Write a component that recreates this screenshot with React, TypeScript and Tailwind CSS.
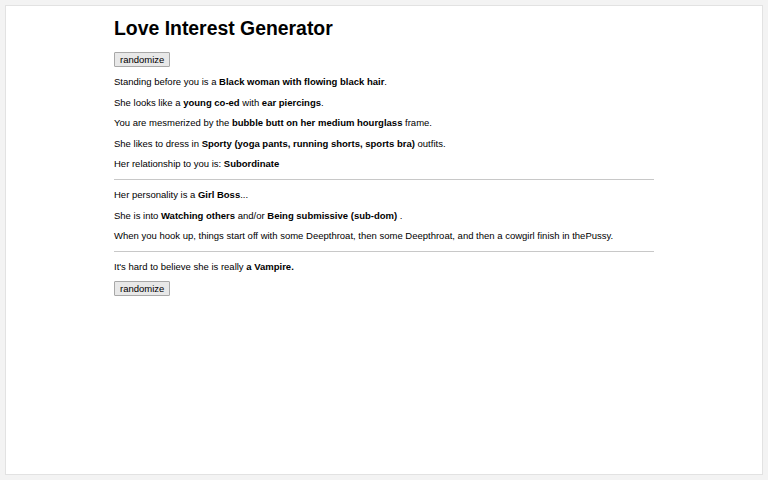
export default function App() {
  const btn =
    'h-[15px] px-[5px] text-[9.5px] leading-[13px] text-black bg-[#e8e8e8] border border-[#a8a8a8] rounded-[1px]';
  return (
    <div className="min-h-[480px] bg-[#f3f3f3] p-[5px] font-['Liberation_Sans',Arial,sans-serif] text-black">
      <div className="h-[470px] bg-white border border-[#e2e2e2]">
        <div className="w-[540px] ml-[108px] pt-[10px] text-[9.5px] leading-[13px]">
          <h1 className="text-[19.4px] font-bold leading-[24px]">Love Interest Generator</h1>
          <div className="mt-[12px]">
            <button className={btn}>randomize</button>
          </div>
          <p className="mt-[8px]">Standing before you is a <b>Black woman with flowing black hair</b>.</p>
          <p className="mt-[7.5px]">She looks like a <b>young co-ed</b> with <b>ear piercings</b>.</p>
          <p className="mt-[7.5px]">You are mesmerized by the <b>bubble butt on her medium hourglass</b> frame.</p>
          <p className="mt-[7.5px]">She likes to dress in <b>Sporty (yoga pants, running shorts, sports bra)</b> outfits.</p>
          <p className="mt-[7.5px]">Her relationship to you is: <b>Subordinate</b></p>
          <hr className="mt-[9px] border-t border-[#c8c8c8]" />
          <p className="mt-[8px]">Her personality is a <b>Girl Boss</b>...</p>
          <p className="mt-[7.5px]">She is into <b>Watching others</b> and/or <b>Being submissive (sub-dom)</b> .</p>
          <p className="mt-[7.5px]">When you hook up, things start off with some Deepthroat, then some Deepthroat, and then a cowgirl finish in thePussy.</p>
          <hr className="mt-[9px] border-t border-[#c8c8c8]" />
          <p className="mt-[8px]">It's hard to believe she is really <b>a Vampire.</b></p>
          <div className="mt-[8px]">
            <button className={btn}>randomize</button>
          </div>
        </div>
      </div>
    </div>
  );
}
